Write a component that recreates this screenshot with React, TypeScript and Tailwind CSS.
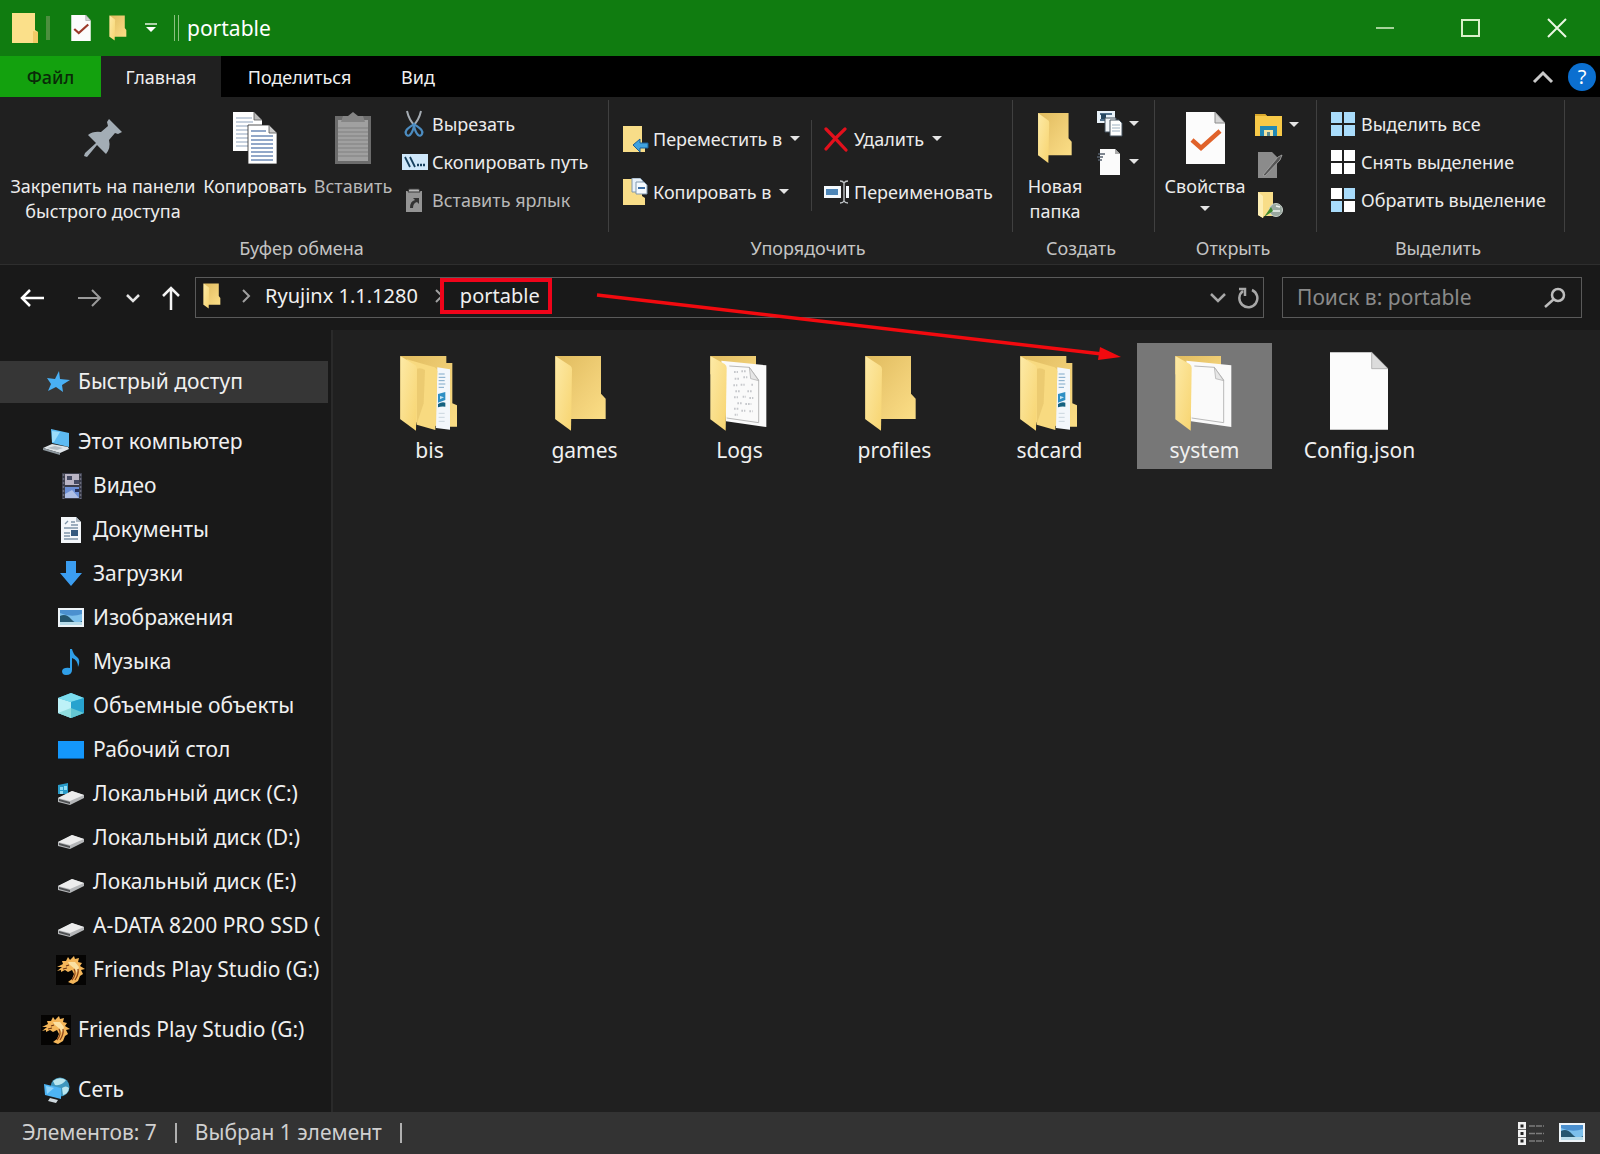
import React from 'react';

type IconProps = { className?: string };

/* ---------- folders and files ---------- */

const FolderGradient = ({ id }: { id: string }) => (
    <defs>
        <linearGradient id={`${id}-back`} x1="0" y1="0" x2="1" y2="1">
            <stop offset="0" stopColor="#e0bb5e" />
            <stop offset=".6" stopColor="#f1d078" />
            <stop offset="1" stopColor="#fbde86" />
        </linearGradient>
        <linearGradient id={`${id}-flap`} x1="0" y1="0" x2="1" y2="1">
            <stop offset="0" stopColor="#fdeaa6" />
            <stop offset="1" stopColor="#f7d470" />
        </linearGradient>
    </defs>
);

const OpenFolderIcon: React.FC<IconProps & { id: string }> = ({ className, id }) => (
    <svg viewBox="0 0 156 234" className={className} aria-hidden="true">
        <FolderGradient id={id} />
        <path d="M2 5H139V118L153 134V195H48L2 195Z" fill={`url(#${id}-back)`} />
        <path d="M2 5L48 38Q52 42 52 48L48 230L2 195Z" fill={`url(#${id}-flap)`} />
    </svg>
);

const EmptyFolder = () => (
    <svg viewBox="0 0 180 240" className="h-20 w-15" aria-hidden="true">
        <FolderGradient id="empty" />
        <path d="M1 6H138V119L152 134V195H47L1 195Z" fill="url(#empty-back)" />
        <path d="M1 6L47 36Q51 40 51 46L48 230L1 196Z" fill="url(#empty-flap)" />
    </svg>
);

const NestedFolder = () => (
    <svg viewBox="0 0 180 240" className="h-20 w-15" aria-hidden="true">
        <FolderGradient id="nested" />
        <path d="M1 6H139V27H157V148L171 154V218H120L1 195Z" fill="url(#nested-back)" />
        <path d="M112 40L150 46V227L108 222Z" fill="#f3f7fb" />
        <path d="M116 60h18M116 70h20M116 80h18M116 90h20M116 100h16" stroke="#7fa9c8" strokeWidth="3" />
        <path d="M114 120l22-6v24l-22 8z" fill="#2f8fc4" />
        <path d="M120 126l12 4-12 6z" fill="#c8e4f2" />
        <path d="M114 150q12-8 22-4v12q-12-2-22 2z" fill="#14617f" />
        <path d="M116 178h18M116 190h18M116 202h18" stroke="#cbd6de" strokeWidth="3" />
        <path d="M20 16L104 40Q112 44 112 52L106 228L50 212Z" fill="#f8da80" />
        <path d="M51 44q12-4 24 4l-4 100-20 60z" fill="#e2c064" opacity=".55" />
        <path d="M1 6L46 34Q51 38 51 46L48 230L1 196Z" fill="url(#nested-flap)" />
    </svg>
);

const DocumentFolder = ({ noisy = false, id }: { noisy?: boolean; id: string }) => (
    <svg viewBox="0 0 180 240" className="h-20 w-15" aria-hidden="true">
        <FolderGradient id={id} />
        <path d="M1 6H138V110H60L1 60Z" fill={`url(#${id}-back)`} />
        <path d="M34 20L169 34V219L48 202Z" fill="#fafafa" />
        <path d="M58 36L118 40L146 78V206L50 192" fill="none" stroke="#b9b9b9" strokeWidth="3" />
        <path d="M118 40L122 74L146 80Z" fill="#e6e6e6" stroke="#a8a8a8" strokeWidth="2" />
        {noisy && (
            <path
                d="M72 54h12M94 52h14M74 74h16M100 70h12M124 92h8M70 94h12M92 92h12M112 112h16M76 112h14M98 128h10M72 130h12M118 132h12M82 148h14M106 150h18M72 164h14M94 170h12M118 172h10M74 182h10"
                stroke="#c6c8cc"
                strokeWidth="6"
                strokeDasharray="5 3"
            />
        )}
        <path d="M1 6L44 30Q50 34 50 42L47 230L1 196Z" fill={`url(#${id}-flap)`} />
    </svg>
);

const BlankFile = () => (
    <svg viewBox="0 0 180 240" className="h-20 w-15 overflow-visible" aria-hidden="true">
        <path d="M0 -5H125L174 44V227H0Z" fill="#fcfcfc" />
        <path d="M125 -5L174 44H125Z" fill="#dcdcdc" stroke="#9d9d9d" strokeWidth="2" />
    </svg>
);

const FlatFolderIcon: React.FC<IconProps> = ({ className }) => (
    <svg viewBox="0 0 26 30" className={className} aria-hidden="true">
        <path d="M0 0H23V17L26 19V30H0Z" fill="#fbe08a" />
        <path d="M21 18L26 19V30H21Z" fill="#f0cb66" />
    </svg>
);

/* ---------- ribbon icons ---------- */

const CheckDocIcon: React.FC<IconProps & { color: string }> = ({ className, color }) => (
    <svg viewBox="0 0 39 52" className={className} aria-hidden="true">
        <path d="M0 0H29L39 11V52H0Z" fill="#fcfcfc" />
        <path d="M29 0V11H39Z" fill="#d5d5d5" stroke="#8c8c8c" />
        <path d="M6 28L15 36L34 19" fill="none" stroke={color} strokeWidth="4.5" />
    </svg>
);

const PinIcon = () => (
    <svg viewBox="0 0 38 38" className="h-[38px] w-[38px]" aria-hidden="true">
        <path d="M25 0L38 13L34 15L31 14L25 21Q27 29 22 35L13 26L3 38L0 37L1 34L12 24L4 16Q9 12 17 13L24 7L23 3Z" fill="#a3adb5" />
    </svg>
);

const CopyIcon = () => (
    <svg viewBox="0 0 44 52" className="h-[52px] w-11" aria-hidden="true">
        <path d="M0 0H21L29 8V39H0Z" fill="#fff" />
        <path d="M21 0V8H29Z" fill="#bbb" stroke="#555" strokeWidth=".8" />
        <path d="M3 6h16M3 10h17M3 14h22M3 18h12M3 22h12M3 26h12M3 30h12M3 34h12" stroke="#8fa3bd" />
        <path d="M15 13H36L44 21V52H15Z" fill="#fff" stroke="#2a2a2a" strokeWidth=".8" />
        <path d="M36 13V21H44Z" fill="#ccc" stroke="#555" strokeWidth=".8" />
        <path d="M18 19h15M18 24h22M18 28h22M18 32h22M18 36h22M18 40h22M18 44h22M18 48h22" stroke="#6f8cb8" strokeWidth="1.3" />
    </svg>
);

const PasteIcon = () => (
    <svg viewBox="0 0 36 52" className="h-[52px] w-9" aria-hidden="true">
        <path d="M0 4H36V52H0Z" fill="#6c6c6c" />
        <path d="M3 8H33V49H3Z" fill="#a0a0a0" />
        <path d="M3 16h30M3 20h30M3 24h30M3 28h30M3 32h30M3 36h30M3 40h30M3 44h30" stroke="#808080" />
        <path d="M6 10L8 4H13L18 0L23 4H28L30 10Z" fill="#858585" />
    </svg>
);

const ScissorsIcon = () => (
    <svg viewBox="0 0 26 28" className="h-7 w-[26px]" aria-hidden="true">
        <path d="M5 1Q7 10 13 16M19 1Q17 10 11 16" fill="none" stroke="#a5acb3" strokeWidth="2" />
        <path d="M12 14C15 17 22 19 20 24C18 28 14 25 12 16C10 25 6 28 4 24C2 19 9 17 12 14Z" fill="none" stroke="#4c8cc0" strokeWidth="2.2" />
    </svg>
);

const CopyPathIcon = () => (
    <svg viewBox="0 0 26 28" className="h-7 w-[26px]" aria-hidden="true">
        <path d="M0 6H26V22H0Z" fill="#cfe8fb" />
        <path d="M3 9L8 19M8 9L13 19" stroke="#16405f" strokeWidth="1.8" />
        <path d="M15 17h8" stroke="#16405f" strokeWidth="2.4" strokeDasharray="2 1" />
    </svg>
);

const PasteShortcutIcon = () => (
    <svg viewBox="0 0 26 28" className="h-7 w-[26px]" aria-hidden="true">
        <path d="M4 5H20V26H4Z" fill="#949494" />
        <path d="M6 6L7 3H17L18 6Z" fill="#b8b8b8" stroke="#3a3a3a" />
        <path d="M8 22Q8 15 13 14L11 12H17V18L15 16Q11 17 11 22Z" fill="#333" />
    </svg>
);

const MoveToIcon = () => (
    <svg viewBox="0 0 26 28" className="h-7 w-[26px]" aria-hidden="true">
        <path d="M0 1H19V18L22 20V27H0Z" fill="#f8dd88" />
        <path d="M10 20L17 14V18H25V23H17V27Z" fill="#3fa2e0" stroke="#1b5f95" />
    </svg>
);

const CopyToIcon = () => (
    <svg viewBox="0 0 26 28" className="h-7 w-[26px]" aria-hidden="true">
        <path d="M0 1H19V18L22 20V27H0Z" fill="#f8dd88" />
        <path d="M9 0H17L20 3V14H9Z" fill="#e8f1f9" stroke="#8098ad" />
        <path d="M13 4H21L24 7V16H13Z" fill="#f5fafe" stroke="#8098ad" />
        <path d="M15 10h7" stroke="#3d6fa5" strokeWidth="2" />
    </svg>
);

const DeleteIcon = () => (
    <svg viewBox="0 0 26 28" className="h-7 w-[26px]" aria-hidden="true">
        <path d="M2 4Q12 14 22 25M21 4Q11 13 2 24" fill="none" stroke="#e3101c" strokeWidth="3.2" strokeLinecap="round" />
    </svg>
);

const RenameIcon = () => (
    <svg viewBox="0 0 26 28" className="h-7 w-[26px]" aria-hidden="true">
        <path d="M0 8H25V20H0Z" fill="#f4f9fd" />
        <path d="M2 11H14V17H2Z" fill="#4d86b8" />
        <path d="M17 7H22V21H17Z" fill="#202020" />
        <path d="M16 3Q19 3 20 5Q21 3 24 3M20 5V23M16 25Q19 25 20 23Q21 25 24 25" fill="none" stroke="#bfc3c6" strokeWidth="1.4" />
    </svg>
);

const NewItemIcon = () => (
    <svg viewBox="0 0 26 28" className="h-7 w-[26px]" aria-hidden="true">
        <path d="M0 1H18V13H0Z" fill="#e9f2f9" />
        <path d="M3 4h12M3 10h5" stroke="#52718c" strokeWidth="2" />
        <path d="M4 4h5v5h-5z" fill="#274760" />
        <path d="M8 8H19V22H8Z" fill="#f2f6f9" stroke="#44535f" />
        <path d="M13 10H22L25 13V26H13Z" fill="#fff" stroke="#44535f" />
        <path d="M15 15h8M15 18h8M15 21h8" stroke="#9db1c1" />
    </svg>
);

const EasyAccessIcon = () => (
    <svg viewBox="0 0 26 28" className="h-7 w-[26px]" aria-hidden="true">
        <path d="M3 1H18L23 6V27H3Z" fill="#fbfbfb" />
        <path d="M18 1V6H23Z" fill="#aaa" />
        <path d="M1 6h7M0 9h6M1 12h4" stroke="#55606e" strokeWidth="1.4" />
    </svg>
);

const OpenIcon = () => (
    <svg viewBox="0 0 28 26" className="h-[26px] w-7" aria-hidden="true">
        <path d="M0 2H10L12 4H27V24H0Z" fill="#f7c948" />
        <path d="M0 2H10L12 4H0Z" fill="#d9a82c" />
        <path d="M5 14H22V24H5Z" fill="#2389b4" />
        <path d="M9 18H18V24H9Z" fill="#f2e3a0" />
        <path d="M12 20h3v4h-3z" fill="#5a8b90" />
    </svg>
);

const EditIcon = () => (
    <svg viewBox="0 0 28 26" className="h-[26px] w-7" aria-hidden="true">
        <path d="M3 0H17L22 5V26H3Z" fill="#8b8b8b" />
        <path d="M8 23L23 5L27 3L25 8L10 24Z" fill="#555" stroke="#a9a9a9" strokeWidth=".8" />
    </svg>
);

const HistoryIcon = () => (
    <svg viewBox="0 0 28 28" className="h-7 w-7" aria-hidden="true">
        <path d="M3 1H18V17L20 25H9L8 27L3 24Z" fill="#f8dd88" />
        <path d="M3 1L8 5V27L3 24Z" fill="#fdeeb4" />
        <circle cx="21" cy="19" r="6.5" fill="#9aa8a0" stroke="#c9d2cc" />
        <path d="M17 20h8M21 15l4 1" stroke="#eef3ef" strokeWidth="1.6" />
        <path d="M9 26L16 16L18 20Z" fill="#3d8b2f" />
    </svg>
);

const SelectGrid = ({ fills }: { fills: string[] }) => (
    <svg viewBox="0 0 24 24" className="mr-0.5 size-6" aria-hidden="true">
        <rect x="0" y="0" width="11" height="11" fill={fills[0]} />
        <rect x="13" y="0" width="11" height="11" fill={fills[1]} />
        <rect x="0" y="13" width="11" height="11" fill={fills[2]} />
        <rect x="13" y="13" width="11" height="11" fill={fills[3]} />
    </svg>
);

const Caret: React.FC<IconProps> = ({ className = '' }) => (
    <svg viewBox="0 0 10 6" className={`h-1.5 w-2.5 shrink-0 ${className}`} aria-hidden="true">
        <path d="M0 0H10L5 5Z" fill="#e4e4e4" />
    </svg>
);

/* ---------- navigation pane icons ---------- */

const StarIcon = () => (
    <svg viewBox="0 0 28 28" className="size-7" aria-hidden="true">
        <path d="M17 3L18 11L28 12L20 17L21 24L14 19L6 23L9 16L5 10L13 11Z" fill="#49b0f5" />
    </svg>
);

const ComputerIcon = () => (
    <svg viewBox="0 0 28 28" className="size-7" aria-hidden="true">
        <path d="M9 1L27 5V19L10 15Z" fill="#5dbbf3" />
        <path d="M10 3L18 4L12 14L10 14Z" fill="#9adcfb" />
        <path d="M10 16L26 19L27 21L18 25L1 20Z" fill="#dfe5e9" />
        <path d="M1 20L18 25V27L1 22Z" fill="#8e989f" />
        <path d="M5 20l8-2 8 2-6 2z" fill="#b3bcc3" />
    </svg>
);

const VideoIcon = () => (
    <svg viewBox="0 0 28 28" className="size-7" aria-hidden="true">
        <path d="M5 1H25V27H5Z" fill="#3b3d4a" />
        <path d="M8 2H22V13H8Z" fill="#b9b4c4" />
        <path d="M8 15H22V26H8Z" fill="#6b8fd6" />
        <path d="M10 4h5v4h-5zM17 8h5v4h-5z" fill="#454a63" />
        <path d="M8 22l7-4 7 8H8z" fill="#aebfe6" />
        <path d="M6.5 2V27M23.5 2V27" stroke="#6a6c7c" strokeWidth="1.5" strokeDasharray="2 2" />
        <path d="M18 17h4v3h-4z" fill="#25305a" />
    </svg>
);

const DocumentsIcon = () => (
    <svg viewBox="0 0 28 28" className="size-7" aria-hidden="true">
        <path d="M4 1H19L24 6V27H4Z" fill="#f4f7fa" />
        <path d="M19 1V6H24Z" fill="#a9b6c1" />
        <path d="M8 8L11 5M14 6h4M14 9h7M7 12h14M7 17h6M7 20h6M7 23h14" stroke="#7f95a9" strokeWidth="1.3" />
        <path d="M14 14h7v6h-7z" fill="#35597e" />
    </svg>
);

const DownloadsIcon = () => (
    <svg viewBox="0 0 28 28" className="size-7" aria-hidden="true">
        <path d="M9 1H19V13H25L14 26L3 13H9Z" fill="#3b9df0" />
    </svg>
);

const PictureIcon: React.FC<IconProps> = ({ className = 'size-7' }) => (
    <svg viewBox="0 0 28 28" className={className} aria-hidden="true">
        <path d="M1 4H27V23H1Z" fill="#eef4f8" />
        <path d="M3 6H25V21H3Z" fill="#7cc0ec" />
        <path d="M3 6H25V10Q14 14 3 9Z" fill="#4b90cf" />
        <path d="M3 12Q9 9 14 15T25 17V18H3Z" fill="#24566f" />
        <path d="M3 18H25V21H3Z" fill="#b7dcea" />
    </svg>
);

const MusicIcon = () => (
    <svg viewBox="0 0 28 28" className="size-7" aria-hidden="true">
        <path d="M13 1H15Q16 6 20 9T21 19Q21 12 15 10V22Q15 27 9 27Q5 27 5 23Q6 19 13 20Z" fill="#2f9fe8" />
    </svg>
);

const CubeIcon = () => (
    <svg viewBox="0 0 28 28" className="size-7" aria-hidden="true">
        <path d="M1 6L14 1L27 6V21L14 26L1 21Z" fill="#3fb6d8" />
        <path d="M1 6L14 10V26L1 21Z" fill="#bdf1f7" />
        <path d="M1 6L14 1L27 6L14 10Z" fill="#7bdcee" />
        <path d="M14 10L27 6V21L14 26Z" fill="#27a3cf" />
        <path d="M1 21L14 16L27 21L14 26Z" fill="#7fd6d4" opacity=".7" />
    </svg>
);

const DesktopIcon = () => (
    <svg viewBox="0 0 28 28" className="size-7" aria-hidden="true">
        <path d="M1 5H27V23H1Z" fill="#1497fb" />
        <path d="M1 22H27V23H1Z" fill="#0a5ea3" />
    </svg>
);

const DriveIcon = ({ system = false }: { system?: boolean }) => (
    <svg viewBox="0 0 28 28" className="size-7" aria-hidden="true">
        {system && (
            <>
                <path d="M1 5L11 3V14L1 14Z" fill="#2a9cc9" />
                <path d="M3 7h3v3h-3zM7 6h3v4h-3zM3 11h3v3h-3z" fill="#8fdcf5" />
            </>
        )}
        <path d="M1 18L15 11L27 15V18L13 25L1 22Z" fill="#b4b6b8" />
        <path d="M1 18L15 11L27 15L13 21Z" fill="#ececec" />
        <path d="M2 19L13 22V24L2 21Z" fill="#4e5052" />
    </svg>
);

const DragonIcon = () => (
    <svg viewBox="0 0 30 30" className="size-[30px] shrink-0" aria-hidden="true">
        <path d="M0 0H30V30H0Z" fill="#050403" />
        <path
            d="M1 16L6 12L1 12L7 9L6 6L10 6L12 2L14 5L18 1L19 4L23 3L22 7L26 8L24 11L29 14L25 15L27 19L24 21L22 26L17 29L12 27L16 24L18 19L16 15L12 17L9 15L5 17L5 15Z"
            fill="#f4b65a"
        />
        <path d="M12 7L19 7L23 12L21 18L19 14L14 10Z" fill="#fbe0a2" />
        <path d="M18 14Q21 19 16 25M22 14Q23 19 19 25" fill="none" stroke="#8a431a" strokeWidth="1.2" />
        <path d="M10 11l3-1M7 14l4-1" stroke="#6a3212" strokeWidth="1.2" />
    </svg>
);

const NetworkIcon = () => (
    <svg viewBox="0 0 28 28" className="size-7" aria-hidden="true">
        <circle cx="18" cy="11" r="9.5" fill="#3f97bd" />
        <path d="M11 5Q17 0 24 4Q20 10 13 9ZM20 12Q24 9 27 12Q26 18 21 19Z" fill="#b9e6ee" />
        <path d="M2 8L19 12V23L3 19Z" fill="#4db4f4" />
        <path d="M4 10L12 12L5 18Z" fill="#8ed4fb" />
        <path d="M8 22L16 24L14 27L6 25Z" fill="#cfd8de" />
    </svg>
);

/* ---------- data ---------- */

interface NavItem {
    label: string;
    icon: React.ReactNode;
}

const computerItems: NavItem[] = [
    { label: 'Видео', icon: <VideoIcon /> },
    { label: 'Документы', icon: <DocumentsIcon /> },
    { label: 'Загрузки', icon: <DownloadsIcon /> },
    { label: 'Изображения', icon: <PictureIcon /> },
    { label: 'Музыка', icon: <MusicIcon /> },
    { label: 'Объемные объекты', icon: <CubeIcon /> },
    { label: 'Рабочий стол', icon: <DesktopIcon /> },
    { label: 'Локальный диск (C:)', icon: <DriveIcon system /> },
    { label: 'Локальный диск (D:)', icon: <DriveIcon /> },
    { label: 'Локальный диск (E:)', icon: <DriveIcon /> },
    { label: 'A-DATA 8200 PRO SSD (', icon: <DriveIcon /> },
    { label: 'Friends Play Studio (G:)', icon: <DragonIcon /> },
];

const files = [
    { name: 'bis', icon: <NestedFolder /> },
    { name: 'games', icon: <EmptyFolder /> },
    { name: 'Logs', icon: <DocumentFolder id="logs" noisy /> },
    { name: 'profiles', icon: <EmptyFolder /> },
    { name: 'sdcard', icon: <NestedFolder /> },
    { name: 'system', icon: <DocumentFolder id="system" />, selected: true },
    { name: 'Config.json', icon: <BlankFile /> },
];

/* ---------- ribbon ---------- */

const RibbonGroup: React.FC<{ title: string; className?: string; children: React.ReactNode }> = ({ title, className = '', children }) => (
    <section className="flex shrink-0 flex-col">
        <div className={`flex h-[132px] border-r border-[#404040] ${className}`}>{children}</div>
        <h2 className="mt-1 pr-1.5 text-center leading-6 text-[#c4c4c4]">{title}</h2>
    </section>
);

const BigButton: React.FC<{ icon: React.ReactNode; className?: string; children: React.ReactNode }> = ({ icon, className = '', children }) => (
    <button className={`flex flex-col items-center leading-[25px] ${className}`}>
        <span className="mb-2.5 flex h-[52px] items-center">{icon}</span>
        {children}
    </button>
);

const SmallButton: React.FC<{ icon: React.ReactNode; label: string; caret?: boolean; disabled?: boolean }> = ({ icon, label, caret, disabled }) => (
    <button disabled={disabled} className={`flex h-[38px] items-center gap-1 whitespace-nowrap ${disabled ? 'text-[#b8b8b8]' : ''}`}>
        {icon}
        <span>{label}</span>
        {caret && <Caret className="ml-1" />}
    </button>
);

const Ribbon = () => (
    <div className="flex h-[168px] overflow-hidden border-b border-[#2e2e2e] bg-[#202020] pt-[3px] text-lg text-[#ececec]">
        <RibbonGroup title="Буфер обмена" className="w-[609px] pl-2">
            <BigButton icon={<PinIcon />} className="w-[190px] pt-3">
                <span className="whitespace-nowrap">Закрепить на панели</span>
                <span>быстрого доступа</span>
            </BigButton>
            <BigButton icon={<CopyIcon />} className="w-[114px] pt-3">
                Копировать
            </BigButton>
            <BigButton icon={<PasteIcon />} className="w-[82px] pt-3 text-[#b8b8b8]">
                Вставить
            </BigButton>
            <div className="flex flex-col pt-[5px] pl-2">
                <SmallButton icon={<ScissorsIcon />} label="Вырезать" />
                <SmallButton icon={<CopyPathIcon />} label="Скопировать путь" />
                <SmallButton icon={<PasteShortcutIcon />} label="Вставить ярлык" disabled />
            </div>
        </RibbonGroup>

        <RibbonGroup title="Упорядочить" className="w-[404px] pl-3.5">
            <div className="my-5 flex h-[91px] w-[189px] flex-col justify-between border-r border-[#404040]">
                <SmallButton icon={<MoveToIcon />} label="Переместить в" caret />
                <SmallButton icon={<CopyToIcon />} label="Копировать в" caret />
            </div>
            <div className="my-5 flex h-[91px] flex-col justify-between pl-3">
                <SmallButton icon={<DeleteIcon />} label="Удалить" caret />
                <SmallButton icon={<RenameIcon />} label="Переименовать" />
            </div>
        </RibbonGroup>

        <RibbonGroup title="Создать" className="w-[142px]">
            <BigButton icon={<OpenFolderIcon id="new" className="h-[52px] w-9" />} className="w-[84px] pt-3">
                <span>Новая</span>
                <span>папка</span>
            </BigButton>
            <div className="flex flex-col pt-[5px]">
                <button aria-label="Создать элемент" className="flex h-[38px] items-center gap-1.5">
                    <NewItemIcon />
                    <Caret />
                </button>
                <button aria-label="Простой доступ" className="flex h-[38px] items-center gap-1.5">
                    <EasyAccessIcon />
                    <Caret />
                </button>
            </div>
        </RibbonGroup>

        <RibbonGroup title="Открыть" className="w-[162px]">
            <BigButton icon={<CheckDocIcon color="#e0622a" className="h-[52px] w-[39px]" />} className="w-[100px] pt-3">
                <span>Свойства</span>
                <span className="flex h-5 items-center">
                    <Caret />
                </span>
            </BigButton>
            <div className="flex flex-col pt-[5px]">
                <button aria-label="Открыть" className="flex h-10 items-center gap-1.5">
                    <OpenIcon />
                    <Caret />
                </button>
                <button aria-label="Изменить" className="flex h-10 items-center">
                    <EditIcon />
                </button>
                <button aria-label="Журнал" className="flex h-10 items-center">
                    <HistoryIcon />
                </button>
            </div>
        </RibbonGroup>

        <RibbonGroup title="Выделить" className="w-[248px] pl-3.5">
            <div className="flex flex-col pt-[5px]">
                <SmallButton icon={<SelectGrid fills={['#a9dcfb', '#a9dcfb', '#a9dcfb', '#a9dcfb']} />} label="Выделить все" />
                <SmallButton icon={<SelectGrid fills={['#fff', '#fff', '#fff', '#fff']} />} label="Снять выделение" />
                <SmallButton icon={<SelectGrid fills={['#fff', '#a9dcfb', '#a9dcfb', '#fff']} />} label="Обратить выделение" />
            </div>
        </RibbonGroup>
    </div>
);

/* ---------- window parts ---------- */

const TitleBar = () => (
    <header className="flex h-14 items-center bg-[#107c10] pl-3 text-white">
        <FlatFolderIcon className="h-[30px] w-[26px]" />
        <span className="ml-2 h-6 w-1 bg-[#4d8f3f]" />
        <button aria-label="Свойства" className="ml-[21px]">
            <CheckDocIcon color="#9c3a2a" className="h-[26px] w-5" />
        </button>
        <button aria-label="Новая папка" className="ml-[18px]">
            <OpenFolderIcon id="quick" className="h-[26px] w-[18px]" />
        </button>
        <button aria-label="Настройка панели быстрого доступа" className="ml-[18px]">
            <svg viewBox="0 0 12 10" className="h-2.5 w-3" aria-hidden="true">
                <path d="M0 1H12" stroke="#e6f0e0" strokeWidth="1.5" />
                <path d="M1 4H11L6 9Z" fill="#fff" />
            </svg>
        </button>
        <span className="ml-[17px] h-[26px] w-[5px] border-x border-[#8cc080]" />
        <h1 className="ml-2 text-[21px] leading-8">portable</h1>
        <div className="ml-auto flex h-full">
            <button aria-label="Свернуть" className="flex w-[86px] items-center justify-center">
                <svg viewBox="0 0 20 20" className="size-5" aria-hidden="true">
                    <path d="M1 10H19" stroke="#d9f0c8" strokeWidth="1.5" />
                </svg>
            </button>
            <button aria-label="Развернуть" className="flex w-[86px] items-center justify-center">
                <svg viewBox="0 0 20 20" className="size-5" aria-hidden="true">
                    <path d="M1 2H18V18H1Z" fill="none" stroke="#d9f0c8" strokeWidth="2" />
                </svg>
            </button>
            <button aria-label="Закрыть" className="flex w-[86px] items-center justify-center">
                <svg viewBox="0 0 20 20" className="size-5" aria-hidden="true">
                    <path d="M1 1L19 19M19 1L1 19" stroke="#eaf7e2" strokeWidth="2" />
                </svg>
            </button>
        </div>
    </header>
);

const Tabs = () => (
    <nav className="flex h-[41px] items-stretch bg-black text-lg text-[#f0f0f0]">
        <button className="w-[101px] bg-[#13a10e] font-medium text-[#0a2a08]">Файл</button>
        <button className="w-[120px] bg-[#202020]">Главная</button>
        <button className="w-[157px]">Поделиться</button>
        <button className="w-20">Вид</button>
        <button aria-label="Свернуть ленту" className="ml-auto mr-3.5">
            <svg viewBox="0 0 22 14" className="h-3.5 w-[22px]" aria-hidden="true">
                <path d="M2 12L11 3L20 12" fill="none" stroke="#c9c9c9" strokeWidth="3" />
            </svg>
        </button>
        <button aria-label="Справка" className="mr-1 size-7 self-center rounded-full bg-[#0b6fd0] text-xl leading-7 text-white">
            ?
        </button>
    </nav>
);

const AddressRow = () => (
    <div className="flex h-[65px] items-center bg-[#191919] pr-[18px] text-[#f0f0f0]">
        <button aria-label="Назад" className="ml-5">
            <svg viewBox="0 0 24 20" className="h-5 w-6" aria-hidden="true">
                <path d="M24 10H2M10 2L2 10L10 18" fill="none" stroke="#fff" strokeWidth="2.5" />
            </svg>
        </button>
        <button aria-label="Вперед" className="ml-[34px]">
            <svg viewBox="0 0 24 20" className="h-5 w-6" aria-hidden="true">
                <path d="M0 10H22M14 2L22 10L14 18" fill="none" stroke="#9a9a9a" strokeWidth="2" />
            </svg>
        </button>
        <button aria-label="Последние расположения" className="ml-6">
            <svg viewBox="0 0 14 10" className="h-2.5 w-3.5" aria-hidden="true">
                <path d="M1 2L7 8L13 2" fill="none" stroke="#e4e4e4" strokeWidth="2.5" />
            </svg>
        </button>
        <button aria-label="Вверх" className="ml-[22px]">
            <svg viewBox="0 0 18 24" className="h-6 w-[18px]" aria-hidden="true">
                <path d="M9 24V2M1 10L9 2L17 10" fill="none" stroke="#f4f4f4" strokeWidth="2.5" />
            </svg>
        </button>

        <div className="ml-[15px] flex h-[41px] flex-1 items-center border border-[#5a5a5a] pr-1 pl-1.5">
            <div className="flex items-center pb-1 text-xl">
                <OpenFolderIcon id="address" className="h-[26px] w-5" />
                <svg viewBox="0 0 10 16" className="ml-[19px] h-4 w-2.5" aria-hidden="true">
                    <path d="M2 2L8 8L2 14" fill="none" stroke="#a0a0a0" strokeWidth="2" />
                </svg>
                <button className="ml-3.5">Ryujinx 1.1.1280</button>
                <svg viewBox="0 0 10 16" className="ml-4 h-4 w-2.5" aria-hidden="true">
                    <path d="M2 2L8 8L2 14" fill="none" stroke="#a0a0a0" strokeWidth="2" />
                </svg>
                <button className="relative ml-4">
                    portable
                    <span className="absolute -inset-y-1 -right-3 -left-5 border-4 border-[#f0041a]" />
                </button>
            </div>
            <button aria-label="Предыдущие расположения" className="ml-auto">
                <svg viewBox="0 0 18 12" className="h-3 w-[18px]" aria-hidden="true">
                    <path d="M2 2L9 9L16 2" fill="none" stroke="#a8a8a8" strokeWidth="2.5" />
                </svg>
            </button>
            <button aria-label="Обновить" className="ml-2.5">
                <svg viewBox="0 0 22 24" className="h-6 w-[22px]" aria-hidden="true">
                    <path d="M15 4A9 9 0 1 1 6 5" fill="none" stroke="#a8a8a8" strokeWidth="2.5" />
                    <path d="M2 3H8V10" fill="none" stroke="#a8a8a8" strokeWidth="2.5" />
                </svg>
            </button>
        </div>

        <label className="ml-[18px] flex h-[41px] w-[300px] items-center border border-[#5a5a5a] pr-3.5 pl-3.5">
            <input aria-label="Поиск" placeholder="Поиск в: portable" className="w-0 flex-1 bg-transparent text-[21px] outline-none placeholder:text-[#8a8a8a]" />
            <svg viewBox="0 0 24 22" className="h-[22px] w-6" aria-hidden="true">
                <circle cx="15" cy="8" r="6" fill="none" stroke="#bdbdbd" strokeWidth="2.5" />
                <path d="M11 12L2 20" stroke="#bdbdbd" strokeWidth="2.5" />
            </svg>
        </label>
    </div>
);

const NavRow: React.FC<NavItem & { child?: boolean; active?: boolean }> = ({ label, icon, child, active }) => (
    <a
        href="#"
        className={`mr-[3px] flex h-[42px] items-center gap-2 overflow-hidden whitespace-nowrap ${child ? 'pl-[57px]' : 'pl-[42px]'} ${active ? 'bg-[#363636]' : ''}`}
    >
        <span className="flex w-7 shrink-0 justify-center">{icon}</span>
        {label}
    </a>
);

const NavigationPane = () => (
    <aside className="flex w-[333px] shrink-0 flex-col gap-[18px] border-r-2 border-[#2a2a2a] bg-[#191919] pt-[31px] text-[21px] text-[#f0f0f0]">
        <NavRow label="Быстрый доступ" icon={<StarIcon />} active />
        <div className="flex flex-col gap-0.5">
            <NavRow label="Этот компьютер" icon={<ComputerIcon />} />
            {computerItems.map((item) => (
                <NavRow key={item.label} {...item} child />
            ))}
        </div>
        <NavRow label="Friends Play Studio (G:)" icon={<DragonIcon />} />
        <NavRow label="Сеть" icon={<NetworkIcon />} />
    </aside>
);

const StatusBar = () => (
    <footer className="flex h-[42px] items-center bg-[#333333] pr-3.5 pl-[22px] text-[21px] text-[#d0d0d0]">
        <span>Элементов: 7</span>
        <span className="mx-[18px] h-5 w-0.5 bg-[#b0b0b0]" />
        <span>Выбран 1 элемент</span>
        <span className="mx-[18px] h-5 w-0.5 bg-[#b0b0b0]" />
        <button aria-label="Таблица" className="ml-auto">
            <svg viewBox="0 0 26 24" className="h-6 w-[26px]" aria-hidden="true">
                <path d="M0 1H8V24H0Z" fill="#f2f2f2" />
                <path d="M2.5 3.5h3v3h-3zM2.5 11h3v3h-3zM2.5 18.5h3v3h-3z" fill="#222" />
                <path d="M0 8.5h8M0 16.5h8" stroke="#666" />
                <path d="M11 5h15M11 12.5h15M11 20h15" stroke="#7c7c7c" strokeWidth="1.5" strokeDasharray="6 1" />
            </svg>
        </button>
        <button aria-label="Крупные значки" className="ml-3.5">
            <PictureIcon className="size-7" />
        </button>
    </footer>
);

export default function App() {
    return (
        <div className="flex min-h-screen flex-col bg-[#202020] font-['Noto_Sans',sans-serif]">
            <TitleBar />
            <Tabs />
            <Ribbon />
            <div className="relative flex flex-1 flex-col">
                <AddressRow />
                <div className="flex flex-1">
                    <NavigationPane />
                    <main className="flex flex-1 flex-wrap content-start gap-5 pt-[13px] pl-[29px]">
                        {files.map((file) => (
                            <button
                                key={file.name}
                                className={`flex h-[126px] w-[135px] flex-col items-center pt-[11px] text-[21px] leading-7 text-[#f0f0f0] ${file.selected ? 'bg-[#777777]' : ''}`}
                            >
                                {file.icon}
                                <span className="mt-0.5">{file.name}</span>
                            </button>
                        ))}
                    </main>
                </div>
                {/* pointer from the address to the selected folder */}
                <svg viewBox="0 0 526 72" className="pointer-events-none absolute top-[28px] left-[596px] h-[72px] w-[526px]" aria-hidden="true">
                    <path d="M1 2L506 61" stroke="#f20a0f" strokeWidth="3.5" />
                    <path d="M504 54L525 64L502 67Z" fill="#f20a0f" />
                </svg>
            </div>
            <StatusBar />
        </div>
    );
}
